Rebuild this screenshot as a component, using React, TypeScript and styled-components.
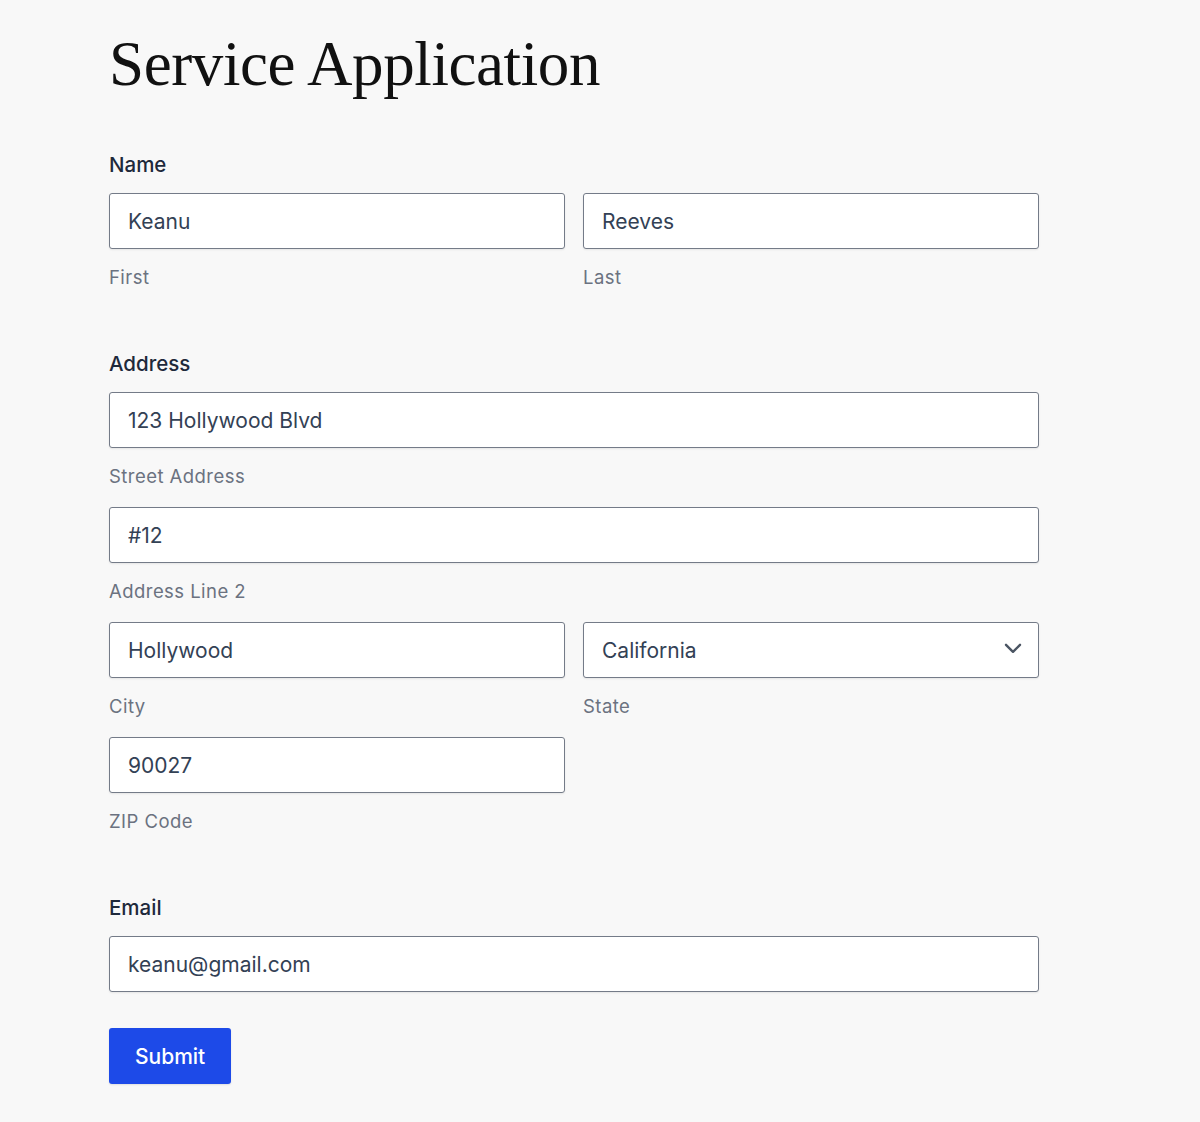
import React from "react";
import styled, { createGlobalStyle } from "styled-components";

const GlobalStyle = createGlobalStyle`
  html, body {
    margin: 0;
    padding: 0;
    background: #f8f8f8;
  }
  body {
    font-family: Inter, "Noto Sans", sans-serif;
    color: #1f2937;
  }
`;

const Page = styled.main`
  width: 930px;
  padding: 22px 0 38px 109px;
`;

const Title = styled.h1`
  font-family: "Liberation Serif", "DejaVu Serif", serif;
  font-weight: 400;
  font-size: 63px;
  line-height: 84px;
  letter-spacing: -0.4px;
  color: #111;
  margin: 0 0 45px;
`;

const Group = styled.fieldset`
  border: 0;
  margin: 0 0 61px;
  padding: 0;
  min-width: 0;
`;

const Legend = styled.div`
  font-size: 20.5px;
  line-height: 28px;
  font-weight: 500;
  color: #1e293b;
  margin-bottom: 14px;
`;

const Row = styled.div<{ $cols?: number }>`
  display: grid;
  grid-template-columns: ${(p) => (p.$cols === 2 ? "1fr 1fr" : "1fr")};
  column-gap: 18px;
  row-gap: 19px;
  & + & {
    margin-top: 19px;
  }
`;

const Field = styled.label`
  display: flex;
  flex-direction: column;
`;

const Input = styled.input`
  box-sizing: border-box;
  height: 56px;
  width: 100%;
  border: 1px solid #747b88;
  border-radius: 3px;
  background: #fff;
  box-shadow: 0 1px 2px rgba(0, 0, 0, 0.08);
  padding: 0 18px;
  font-family: Inter, "Noto Sans", sans-serif;
  font-size: 21px;
  color: #334155;
  outline: none;
`;

const SelectWrap = styled.div`
  position: relative;
`;

const Select = styled.select`
  box-sizing: border-box;
  appearance: none;
  height: 56px;
  width: 100%;
  border: 1px solid #747b88;
  border-radius: 3px;
  background: #fff;
  box-shadow: 0 1px 2px rgba(0, 0, 0, 0.08);
  padding: 0 48px 0 18px;
  font-family: Inter, "Noto Sans", sans-serif;
  font-size: 21px;
  color: #334155;
  outline: none;
`;

const Chevron = styled.svg`
  position: absolute;
  right: 12px;
  top: 50%;
  width: 28px;
  height: 28px;
  transform: translateY(-56%);
  pointer-events: none;
`;

const Help = styled.span`
  font-size: 18.5px;
  line-height: 24px;
  letter-spacing: 0.45px;
  color: #6b7280;
  margin-top: 16px;
`;

const Submit = styled.button`
  display: block;
  height: 56px;
  padding: 0 26px;
  border: 0;
  border-radius: 3px;
  background: #1d4ae8;
  color: #fff;
  font-family: Inter, "Noto Sans", sans-serif;
  font-size: 21px;
  font-weight: 500;
  box-shadow: 0 1px 2px rgba(0, 0, 0, 0.1);
  margin-top: -25px;
`;

export default function App() {
  return (
    <>
      <GlobalStyle />
      <Page>
        <Title>Service Application</Title>

        <Group>
          <Legend>Name</Legend>
          <Row $cols={2}>
            <Field>
              <Input defaultValue="Keanu" />
              <Help>First</Help>
            </Field>
            <Field>
              <Input defaultValue="Reeves" />
              <Help>Last</Help>
            </Field>
          </Row>
        </Group>

        <Group>
          <Legend>Address</Legend>
          <Row>
            <Field>
              <Input defaultValue="123 Hollywood Blvd" />
              <Help>Street Address</Help>
            </Field>
          </Row>
          <Row>
            <Field>
              <Input defaultValue="#12" />
              <Help>Address Line 2</Help>
            </Field>
          </Row>
          <Row $cols={2}>
            <Field>
              <Input defaultValue="Hollywood" />
              <Help>City</Help>
            </Field>
            <Field>
              <SelectWrap>
                <Select defaultValue="California">
                  <option>Arizona</option>
                  <option>California</option>
                  <option>Nevada</option>
                  <option>Oregon</option>
                </Select>
                <Chevron viewBox="0 0 20 20" fill="none">
                  <path
                    d="M5 7.5l5 5 5-5"
                    stroke="#4b5563"
                    strokeWidth="1.7"
                    strokeLinecap="round"
                    strokeLinejoin="round"
                  />
                </Chevron>
              </SelectWrap>
              <Help>State</Help>
            </Field>
            <Field>
              <Input defaultValue="90027" />
              <Help>ZIP Code</Help>
            </Field>
          </Row>
        </Group>

        <Group>
          <Legend>Email</Legend>
          <Row>
            <Field>
              <Input type="email" defaultValue="keanu@gmail.com" />
            </Field>
          </Row>
        </Group>

        <Submit type="button">Submit</Submit>
      </Page>
    </>
  );
}
